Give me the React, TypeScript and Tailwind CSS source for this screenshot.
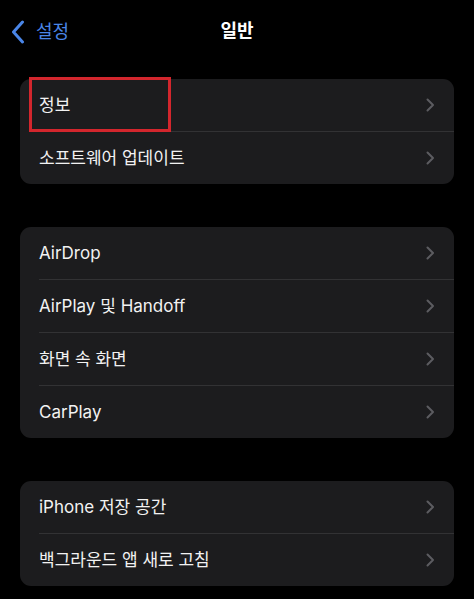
const groups: string[][] = [
  ['정보', '소프트웨어 업데이트'],
  ['AirDrop', 'AirPlay 및 Handoff', '화면 속 화면', 'CarPlay'],
  ['iPhone 저장 공간', '백그라운드 앱 새로 고침'],
];

function Chevron() {
  return (
    <svg width="9" height="14" viewBox="0 0 9 14" fill="none" className="shrink-0">
      <path d="M1.5 1.5L7 7l-5.5 5.5" stroke="#5c5c60" strokeWidth="2" strokeLinecap="round" strokeLinejoin="round" />
    </svg>
  );
}

export default function App() {
  return (
    <div
      className="min-h-[599px] w-[474px] bg-black text-white"
      style={{ fontFamily: 'Inter, "Noto Sans CJK KR", sans-serif' }}
    >
      {/* Nav bar */}
      <header className="relative flex h-[62px] items-center justify-center">
        <div className="absolute left-[11px] top-[20px] flex items-center gap-[11px] text-[#4a86e8]">
          <svg width="14" height="24" viewBox="0 0 14 24" fill="none">
            <path d="M11.5 2L2.5 12l9 10" stroke="currentColor" strokeWidth="3" strokeLinecap="round" strokeLinejoin="round" />
          </svg>
          <span className="text-[18px] leading-none">설정</span>
        </div>
        <h1 className="text-[18px] font-bold leading-none">일반</h1>
      </header>

      <main className="flex flex-col gap-[43px] px-[20px] pt-[17px]">
        {groups.map((items, gi) => (
          <section key={gi} className="relative rounded-[11px] bg-[#1c1c1e]">
            {items.map((label, i) => (
              <div key={label}>
                {i > 0 && <div className="ml-[19px] h-px bg-[#323234]" />}
                <div className="flex h-[52px] items-center justify-between px-[19px]">
                  <span className="text-[17px] leading-none text-[#f2f2f2]">{label}</span>
                  <Chevron />
                </div>
              </div>
            ))}
            {gi === 0 && (
              <div className="pointer-events-none absolute left-[9px] top-[-2px] h-[55px] w-[142px] border-[3px] border-[#d3262d]" />
            )}
          </section>
        ))}
      </main>
    </div>
  );
}
